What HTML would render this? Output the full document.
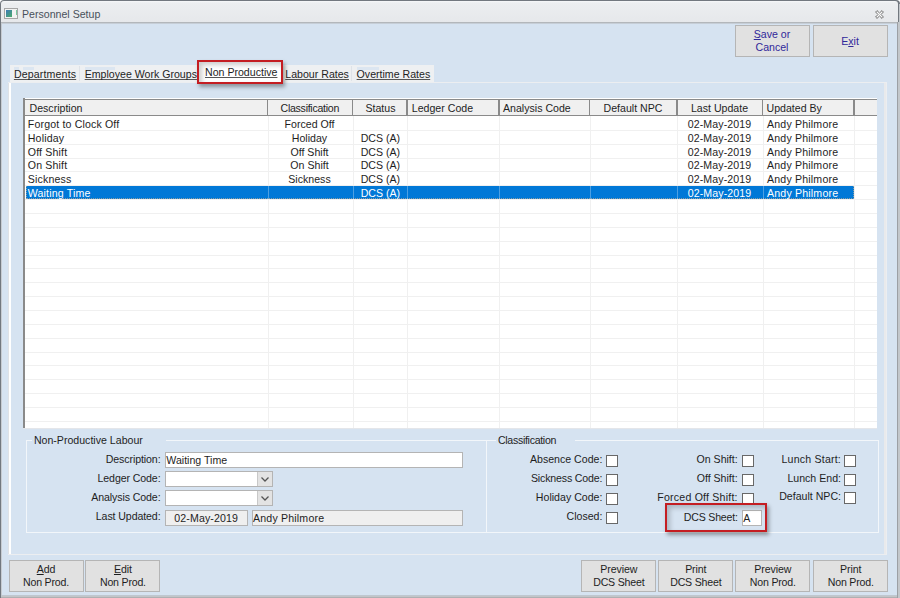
<!DOCTYPE html>
<html><head><meta charset="utf-8"><style>
html,body{margin:0;padding:0;}
body{width:900px;height:598px;position:relative;overflow:hidden;background:#ffffff;font-family:"Liberation Sans",sans-serif;}
.t{position:absolute;white-space:nowrap;line-height:1;}
</style></head><body>
<div style="position:absolute;left:0px;top:0px;width:900px;height:598px;background:#ffffff;"></div>
<div style="position:absolute;left:0px;top:0px;width:900px;height:598px;background:#72787f;border-radius:4px 4px 0 0;"></div>
<div style="position:absolute;left:1px;top:1px;width:897px;height:21px;background:linear-gradient(#f7f8f9 0px,#eceef0 2px,#e6e8eb 21px);border-radius:3px 3px 0 0;"></div>
<div style="position:absolute;left:899px;top:4px;width:1px;height:18px;background:#c3c7cb;"></div>
<div style="position:absolute;left:1px;top:22px;width:896px;height:1px;background:#b3b7bb;"></div>
<div style="position:absolute;left:1px;top:23px;width:896px;height:1px;background:#c6ced7;"></div>
<div style="position:absolute;left:1px;top:24px;width:896px;height:571px;background:#d6e3f1;"></div>
<div style="position:absolute;left:1px;top:23px;width:1px;height:573px;background:#c6cbd1;"></div>
<div style="position:absolute;left:897px;top:22px;width:1px;height:576px;background:#9ca0a5;"></div>
<div style="position:absolute;left:898px;top:22px;width:2px;height:576px;background:#c3c7cb;"></div>
<div style="position:absolute;left:1px;top:595px;width:896px;height:1px;background:#bfc7cf;"></div>
<div style="position:absolute;left:1px;top:596px;width:896px;height:1px;background:#c3c5c8;"></div>
<div style="position:absolute;left:1px;top:597px;width:896px;height:1px;background:#aeb0b3;"></div>
<div style="position:absolute;left:4px;top:8px;width:14px;height:11px;background:#f2f3f2;border:1px solid #a6a6a6;box-sizing:border-box;"></div>
<div style="position:absolute;left:6px;top:10px;width:6px;height:7px;background:linear-gradient(135deg,#3d7bb8,#4bab6a);"></div>
<div style="position:absolute;left:16px;top:10px;width:1px;height:5px;background:#7bc7a0;"></div>
<div class="t" style="left:22px;top:9.03px;font-size:10.6px;color:#48505a;">Personnel Setup</div>
<svg style="position:absolute;left:875px;top:9.7px" width="9" height="9" viewBox="0 0 9 9"><path d="M0.6 2 L2 0.6 L4.5 3 L7 0.6 L8.4 2 L6 4.5 L8.4 7 L7 8.4 L4.5 6 L2 8.4 L0.6 7 L3 4.5 Z" fill="#fbfbfb" stroke="#6f6f6f" stroke-width="1" stroke-linejoin="miter"/></svg>
<div style="position:absolute;left:735px;top:25px;width:75px;height:32px;background:#e1e1e1;border:1px solid #b5b5b5;box-sizing:border-box;"></div>
<div style="position:absolute;left:813px;top:25px;width:75px;height:32px;background:#e1e1e1;border:1px solid #b5b5b5;box-sizing:border-box;"></div>
<div class="t" style="left:672px;width:200px;text-align:center;top:28.83px;font-size:10.6px;color:#30289a;"><u>S</u>ave or</div>
<div class="t" style="left:672px;width:200px;text-align:center;top:41.53px;font-size:10.6px;color:#30289a;">Cancel</div>
<div class="t" style="left:750px;width:200px;text-align:center;top:36.13px;font-size:10.6px;color:#30289a;">E<u>x</u>it</div>
<div style="position:absolute;left:8px;top:82px;width:879px;height:473px;background:#eceef1;"></div>
<div style="position:absolute;left:11px;top:83px;width:873px;height:471px;background:#d6e3f1;"></div>
<div style="position:absolute;left:9px;top:83px;width:2px;height:471px;background:#ffffff;"></div>
<div style="position:absolute;left:8px;top:83px;width:1px;height:471px;background:#dfe2e6;"></div>
<div style="position:absolute;left:884px;top:83px;width:2px;height:471px;background:#e9eaec;"></div>
<div style="position:absolute;left:10px;top:65px;width:424px;height:17px;background:#eef0f2;"></div>
<div style="position:absolute;left:79px;top:66px;width:1px;height:15px;background:#dfe3e8;"></div>
<div style="position:absolute;left:351px;top:66px;width:1px;height:15px;background:#dfe3e8;"></div>
<div style="position:absolute;left:14px;top:67px;width:5px;height:3px;background:#dce6f1;"></div>
<div style="position:absolute;left:23px;top:67px;width:11px;height:3px;background:#dce6f1;"></div>
<div style="position:absolute;left:85px;top:67px;width:30px;height:3px;background:#dce6f1;"></div>
<div style="position:absolute;left:357px;top:67px;width:22px;height:3px;background:#dce6f1;"></div>
<div class="t" style="left:13.9px;top:68.83px;font-size:10.6px;color:#1e1e1e;text-decoration:underline;text-decoration-color:#555;text-decoration-skip-ink:none;letter-spacing:0.15px;">Departments</div>
<div class="t" style="left:84.7px;top:68.83px;font-size:10.6px;color:#1e1e1e;text-decoration:underline;text-decoration-color:#555;text-decoration-skip-ink:none;">Employee Work Groups</div>
<div class="t" style="left:285.3px;top:68.83px;font-size:10.6px;color:#1e1e1e;text-decoration:underline;text-decoration-color:#555;text-decoration-skip-ink:none;">Labour Rates</div>
<div class="t" style="left:356.6px;top:68.83px;font-size:10.6px;color:#1e1e1e;text-decoration:underline;text-decoration-color:#555;text-decoration-skip-ink:none;">Overtime Rates</div>
<div style="position:absolute;left:197px;top:60px;width:86px;height:24px;background:#ffffff;border:2px solid #c41d22;box-sizing:border-box;box-shadow:2px 3px 4px rgba(0,0,0,0.35), inset 3px 3px 5px rgba(0,0,0,0.2);"></div>
<div class="t" style="left:205px;top:67.33px;font-size:10.6px;color:#1e1e1e;text-decoration:underline;text-decoration-color:#555;text-decoration-skip-ink:none;">Non Productive</div>
<div style="position:absolute;left:23px;top:98px;width:853.5px;height:330px;background:#ffffff;"></div>
<div style="position:absolute;left:23px;top:98px;width:2px;height:330px;background:#8a8a8a;"></div>
<div style="position:absolute;left:25px;top:99px;width:851.5px;height:16px;background:#f0f0f0;"></div>
<div style="position:absolute;left:25px;top:98.5px;width:851.5px;height:1.5px;background:#8a8a8a;"></div>
<div style="position:absolute;left:25px;top:114.5px;width:851.5px;height:1.5px;background:#8a8a8a;"></div>
<div style="position:absolute;left:266.5px;top:99px;width:1.6px;height:16px;background:#8a8a8a;"></div>
<div style="position:absolute;left:351.8px;top:99px;width:1.6px;height:16px;background:#8a8a8a;"></div>
<div style="position:absolute;left:406px;top:99px;width:1.6px;height:16px;background:#8a8a8a;"></div>
<div style="position:absolute;left:498px;top:99px;width:1.6px;height:16px;background:#8a8a8a;"></div>
<div style="position:absolute;left:588.8px;top:99px;width:1.6px;height:16px;background:#8a8a8a;"></div>
<div style="position:absolute;left:676.2px;top:99px;width:1.6px;height:16px;background:#8a8a8a;"></div>
<div style="position:absolute;left:761.8px;top:99px;width:1.6px;height:16px;background:#8a8a8a;"></div>
<div style="position:absolute;left:853px;top:99px;width:1.6px;height:16px;background:#8a8a8a;"></div>
<div style="position:absolute;left:267.7px;top:116px;width:1px;height:312px;background:#f0f0f0;"></div>
<div style="position:absolute;left:353.0px;top:116px;width:1px;height:312px;background:#f0f0f0;"></div>
<div style="position:absolute;left:407.2px;top:116px;width:1px;height:312px;background:#f0f0f0;"></div>
<div style="position:absolute;left:499.2px;top:116px;width:1px;height:312px;background:#f0f0f0;"></div>
<div style="position:absolute;left:590.0px;top:116px;width:1px;height:312px;background:#f0f0f0;"></div>
<div style="position:absolute;left:677.4000000000001px;top:116px;width:1px;height:312px;background:#f0f0f0;"></div>
<div style="position:absolute;left:763.0px;top:116px;width:1px;height:312px;background:#f0f0f0;"></div>
<div style="position:absolute;left:854.2px;top:116px;width:1px;height:312px;background:#f0f0f0;"></div>
<div style="position:absolute;left:25px;top:129.9px;width:851.5px;height:1px;background:#f0f0f0;"></div>
<div style="position:absolute;left:25px;top:143.75px;width:851.5px;height:1px;background:#f0f0f0;"></div>
<div style="position:absolute;left:25px;top:157.6px;width:851.5px;height:1px;background:#f0f0f0;"></div>
<div style="position:absolute;left:25px;top:171.45px;width:851.5px;height:1px;background:#f0f0f0;"></div>
<div style="position:absolute;left:25px;top:185.3px;width:851.5px;height:1px;background:#f0f0f0;"></div>
<div style="position:absolute;left:25px;top:199.15px;width:851.5px;height:1px;background:#f0f0f0;"></div>
<div style="position:absolute;left:25px;top:213.0px;width:851.5px;height:1px;background:#f0f0f0;"></div>
<div style="position:absolute;left:25px;top:226.85000000000002px;width:851.5px;height:1px;background:#f0f0f0;"></div>
<div style="position:absolute;left:25px;top:240.7px;width:851.5px;height:1px;background:#f0f0f0;"></div>
<div style="position:absolute;left:25px;top:254.55px;width:851.5px;height:1px;background:#f0f0f0;"></div>
<div style="position:absolute;left:25px;top:268.4px;width:851.5px;height:1px;background:#f0f0f0;"></div>
<div style="position:absolute;left:25px;top:282.25px;width:851.5px;height:1px;background:#f0f0f0;"></div>
<div style="position:absolute;left:25px;top:296.1px;width:851.5px;height:1px;background:#f0f0f0;"></div>
<div style="position:absolute;left:25px;top:309.95px;width:851.5px;height:1px;background:#f0f0f0;"></div>
<div style="position:absolute;left:25px;top:323.8px;width:851.5px;height:1px;background:#f0f0f0;"></div>
<div style="position:absolute;left:25px;top:337.65px;width:851.5px;height:1px;background:#f0f0f0;"></div>
<div style="position:absolute;left:25px;top:351.5px;width:851.5px;height:1px;background:#f0f0f0;"></div>
<div style="position:absolute;left:25px;top:365.35px;width:851.5px;height:1px;background:#f0f0f0;"></div>
<div style="position:absolute;left:25px;top:379.2px;width:851.5px;height:1px;background:#f0f0f0;"></div>
<div style="position:absolute;left:25px;top:393.04999999999995px;width:851.5px;height:1px;background:#f0f0f0;"></div>
<div style="position:absolute;left:25px;top:406.9px;width:851.5px;height:1px;background:#f0f0f0;"></div>
<div style="position:absolute;left:25px;top:420.75px;width:851.5px;height:1px;background:#f0f0f0;"></div>
<div style="position:absolute;left:23px;top:428px;width:853.5px;height:1px;background:#e4e6ea;"></div>
<div style="position:absolute;left:26px;top:185.75px;width:828px;height:13.3px;background:#0078d7;"></div>
<div style="position:absolute;left:26px;top:185.75px;width:828px;height:13.3px;border:1px dotted rgba(255,190,120,0.55);border-top:none;box-sizing:border-box;"></div>
<div style="position:absolute;left:267.7px;top:186px;width:1px;height:13px;background:rgba(255,255,255,0.3);"></div>
<div style="position:absolute;left:353.0px;top:186px;width:1px;height:13px;background:rgba(255,255,255,0.3);"></div>
<div style="position:absolute;left:407.2px;top:186px;width:1px;height:13px;background:rgba(255,255,255,0.3);"></div>
<div style="position:absolute;left:499.2px;top:186px;width:1px;height:13px;background:rgba(255,255,255,0.3);"></div>
<div style="position:absolute;left:590.0px;top:186px;width:1px;height:13px;background:rgba(255,255,255,0.3);"></div>
<div style="position:absolute;left:677.4000000000001px;top:186px;width:1px;height:13px;background:rgba(255,255,255,0.3);"></div>
<div style="position:absolute;left:763.0px;top:186px;width:1px;height:13px;background:rgba(255,255,255,0.3);"></div>
<div class="t" style="left:29.5px;top:103.33px;font-size:10.6px;color:#1e1e1e;">Description</div>
<div class="t" style="left:209.8px;width:200px;text-align:center;top:103.33px;font-size:10.6px;color:#1e1e1e;letter-spacing:-0.28px;">Classification</div>
<div class="t" style="left:280.5px;width:200px;text-align:center;top:103.33px;font-size:10.6px;color:#1e1e1e;">Status</div>
<div class="t" style="left:411.8px;top:103.33px;font-size:10.6px;color:#1e1e1e;">Ledger Code</div>
<div class="t" style="left:503px;top:103.33px;font-size:10.6px;color:#1e1e1e;">Analysis Code</div>
<div class="t" style="left:533px;width:200px;text-align:center;top:103.33px;font-size:10.6px;color:#1e1e1e;">Default NPC</div>
<div class="t" style="left:619.5px;width:200px;text-align:center;top:103.33px;font-size:10.6px;color:#1e1e1e;">Last Update</div>
<div class="t" style="left:766.5px;top:103.33px;font-size:10.6px;color:#1e1e1e;">Updated By</div>
<div class="t" style="left:27.8px;top:118.93px;font-size:10.6px;color:#1e1e1e;letter-spacing:0.15px;">Forgot to Clock Off</div>
<div class="t" style="left:209.5px;width:200px;text-align:center;top:118.93px;font-size:10.6px;color:#1e1e1e;">Forced Off</div>
<div class="t" style="left:619.5px;width:200px;text-align:center;top:118.93px;font-size:10.6px;color:#1e1e1e;letter-spacing:0.12px;">02-May-2019</div>
<div class="t" style="left:767px;top:118.93px;font-size:10.6px;color:#1e1e1e;letter-spacing:0.18px;">Andy Philmore</div>
<div class="t" style="left:27.8px;top:132.78px;font-size:10.6px;color:#1e1e1e;letter-spacing:0.15px;">Holiday</div>
<div class="t" style="left:209.5px;width:200px;text-align:center;top:132.78px;font-size:10.6px;color:#1e1e1e;">Holiday</div>
<div class="t" style="left:360.7px;top:132.78px;font-size:10.6px;color:#1e1e1e;">DCS (A)</div>
<div class="t" style="left:619.5px;width:200px;text-align:center;top:132.78px;font-size:10.6px;color:#1e1e1e;letter-spacing:0.12px;">02-May-2019</div>
<div class="t" style="left:767px;top:132.78px;font-size:10.6px;color:#1e1e1e;letter-spacing:0.18px;">Andy Philmore</div>
<div class="t" style="left:27.8px;top:146.63px;font-size:10.6px;color:#1e1e1e;letter-spacing:0.15px;">Off Shift</div>
<div class="t" style="left:209.5px;width:200px;text-align:center;top:146.63px;font-size:10.6px;color:#1e1e1e;">Off Shift</div>
<div class="t" style="left:360.7px;top:146.63px;font-size:10.6px;color:#1e1e1e;">DCS (A)</div>
<div class="t" style="left:619.5px;width:200px;text-align:center;top:146.63px;font-size:10.6px;color:#1e1e1e;letter-spacing:0.12px;">02-May-2019</div>
<div class="t" style="left:767px;top:146.63px;font-size:10.6px;color:#1e1e1e;letter-spacing:0.18px;">Andy Philmore</div>
<div class="t" style="left:27.8px;top:160.48px;font-size:10.6px;color:#1e1e1e;letter-spacing:0.15px;">On Shift</div>
<div class="t" style="left:209.5px;width:200px;text-align:center;top:160.48px;font-size:10.6px;color:#1e1e1e;">On Shift</div>
<div class="t" style="left:360.7px;top:160.48px;font-size:10.6px;color:#1e1e1e;">DCS (A)</div>
<div class="t" style="left:619.5px;width:200px;text-align:center;top:160.48px;font-size:10.6px;color:#1e1e1e;letter-spacing:0.12px;">02-May-2019</div>
<div class="t" style="left:767px;top:160.48px;font-size:10.6px;color:#1e1e1e;letter-spacing:0.18px;">Andy Philmore</div>
<div class="t" style="left:27.8px;top:174.33px;font-size:10.6px;color:#1e1e1e;letter-spacing:0.15px;">Sickness</div>
<div class="t" style="left:209.5px;width:200px;text-align:center;top:174.33px;font-size:10.6px;color:#1e1e1e;">Sickness</div>
<div class="t" style="left:360.7px;top:174.33px;font-size:10.6px;color:#1e1e1e;">DCS (A)</div>
<div class="t" style="left:619.5px;width:200px;text-align:center;top:174.33px;font-size:10.6px;color:#1e1e1e;letter-spacing:0.12px;">02-May-2019</div>
<div class="t" style="left:767px;top:174.33px;font-size:10.6px;color:#1e1e1e;letter-spacing:0.18px;">Andy Philmore</div>
<div class="t" style="left:27.8px;top:188.18px;font-size:10.6px;color:#ffffff;letter-spacing:0.15px;">Waiting Time</div>
<div class="t" style="left:360.7px;top:188.18px;font-size:10.6px;color:#ffffff;">DCS (A)</div>
<div class="t" style="left:619.5px;width:200px;text-align:center;top:188.18px;font-size:10.6px;color:#ffffff;letter-spacing:0.12px;">02-May-2019</div>
<div class="t" style="left:767px;top:188.18px;font-size:10.6px;color:#ffffff;letter-spacing:0.18px;">Andy Philmore</div>
<div style="position:absolute;left:25.5px;top:440px;width:1px;height:92.5px;background:#f2f6fa;"></div>
<div style="position:absolute;left:25.5px;top:532px;width:460.5px;height:1px;background:#f2f6fa;"></div>
<div style="position:absolute;left:25.5px;top:440px;width:6px;height:1px;background:#f2f6fa;"></div>
<div style="position:absolute;left:166px;top:440px;width:320px;height:1px;background:#f2f6fa;"></div>
<div style="position:absolute;left:486px;top:440px;width:1px;height:92.5px;background:#f2f6fa;"></div>
<div class="t" style="left:33.9px;top:434.73px;font-size:10.6px;color:#1e1e1e;">Non-Productive Labour</div>
<div style="position:absolute;left:486px;top:440px;width:10px;height:1px;background:#f2f6fa;"></div>
<div style="position:absolute;left:575px;top:440px;width:303px;height:1px;background:#f2f6fa;"></div>
<div style="position:absolute;left:878px;top:440px;width:1px;height:92.5px;background:#f2f6fa;"></div>
<div style="position:absolute;left:486px;top:532px;width:392.5px;height:1px;background:#f2f6fa;"></div>
<div class="t" style="left:497.9px;top:434.73px;font-size:10.6px;color:#1e1e1e;letter-spacing:-0.3px;">Classification</div>
<div class="t" style="right:739.5px;top:453.93px;font-size:10.6px;color:#1e1e1e;letter-spacing:-0.1px;">Description:</div>
<div class="t" style="right:739.5px;top:472.73px;font-size:10.6px;color:#1e1e1e;letter-spacing:-0.1px;">Ledger Code:</div>
<div class="t" style="right:739.5px;top:491.73px;font-size:10.6px;color:#1e1e1e;letter-spacing:-0.1px;">Analysis Code:</div>
<div class="t" style="right:739.5px;top:511.43px;font-size:10.6px;color:#1e1e1e;letter-spacing:-0.1px;">Last Updated:</div>
<div style="position:absolute;left:165px;top:452px;width:298px;height:16px;background:#fff;border:1px solid #b4b4b4;box-sizing:border-box;"></div>
<div class="t" style="left:166.3px;top:455.03px;font-size:10.6px;color:#1e1e1e;">Waiting Time</div>
<div style="position:absolute;left:165px;top:471.4px;width:108px;height:16px;background:#fff;border:1px solid #b4b4b4;box-sizing:border-box;"></div>
<div style="position:absolute;left:257px;top:472.4px;width:15px;height:14px;background:#e3e3e3;border-left:1px solid #c8c8c8;box-sizing:border-box;"></div>
<svg style="position:absolute;left:261px;top:476.9px" width="8" height="5" viewBox="0 0 8 5"><path d="M0.5 0.5 L4 4 L7.5 0.5" fill="none" stroke="#555" stroke-width="1.25"/></svg>
<div style="position:absolute;left:165px;top:490.4px;width:108px;height:16px;background:#fff;border:1px solid #b4b4b4;box-sizing:border-box;"></div>
<div style="position:absolute;left:257px;top:491.4px;width:15px;height:14px;background:#e3e3e3;border-left:1px solid #c8c8c8;box-sizing:border-box;"></div>
<svg style="position:absolute;left:261px;top:495.9px" width="8" height="5" viewBox="0 0 8 5"><path d="M0.5 0.5 L4 4 L7.5 0.5" fill="none" stroke="#555" stroke-width="1.25"/></svg>
<div style="position:absolute;left:165px;top:510px;width:83px;height:16px;background:#efefef;border:1px solid #b4b4b4;box-sizing:border-box;"></div>
<div style="position:absolute;left:252px;top:510px;width:211px;height:16px;background:#efefef;border:1px solid #b4b4b4;box-sizing:border-box;"></div>
<div class="t" style="left:106.19999999999999px;width:200px;text-align:center;top:512.73px;font-size:10.6px;color:#1e1e1e;letter-spacing:0.12px;">02-May-2019</div>
<div class="t" style="left:253px;top:512.73px;font-size:10.6px;color:#1e1e1e;letter-spacing:0.18px;">Andy Philmore</div>
<div style="position:absolute;left:606px;top:455px;width:12px;height:12px;background:#fff;border:1px solid #686868;box-sizing:border-box;"></div>
<div class="t" style="right:297.6px;top:454.03px;font-size:10.6px;color:#1e1e1e;">Absence Code:</div>
<div style="position:absolute;left:606px;top:474px;width:12px;height:12px;background:#fff;border:1px solid #686868;box-sizing:border-box;"></div>
<div class="t" style="right:297.6px;top:473.03px;font-size:10.6px;color:#1e1e1e;letter-spacing:-0.15px;">Sickness Code:</div>
<div style="position:absolute;left:606px;top:493px;width:12px;height:12px;background:#fff;border:1px solid #686868;box-sizing:border-box;"></div>
<div class="t" style="right:297.6px;top:492.03px;font-size:10.6px;color:#1e1e1e;">Holiday Code:</div>
<div style="position:absolute;left:606px;top:512px;width:12px;height:12px;background:#fff;border:1px solid #686868;box-sizing:border-box;"></div>
<div class="t" style="right:297.6px;top:511.03px;font-size:10.6px;color:#1e1e1e;">Closed:</div>
<div style="position:absolute;left:742px;top:455.3px;width:12px;height:12px;background:#fff;border:1px solid #686868;box-sizing:border-box;"></div>
<div class="t" style="right:162.29999999999995px;top:454.33px;font-size:10.6px;color:#1e1e1e;">On Shift:</div>
<div style="position:absolute;left:742px;top:474.1px;width:12px;height:12px;background:#fff;border:1px solid #686868;box-sizing:border-box;"></div>
<div class="t" style="right:162.29999999999995px;top:473.13px;font-size:10.6px;color:#1e1e1e;">Off Shift:</div>
<div style="position:absolute;left:742px;top:492.90000000000003px;width:12px;height:12px;background:#fff;border:1px solid #686868;box-sizing:border-box;"></div>
<div class="t" style="right:162.29999999999995px;top:491.93px;font-size:10.6px;color:#1e1e1e;letter-spacing:0.2px;">Forced Off Shift:</div>
<div style="position:absolute;left:844.2px;top:455.2px;width:12px;height:12px;background:#fff;border:1px solid #686868;box-sizing:border-box;"></div>
<div class="t" style="right:59px;top:454.23px;font-size:10.6px;color:#1e1e1e;letter-spacing:0.2px;">Lunch Start:</div>
<div style="position:absolute;left:844.2px;top:473.7px;width:12px;height:12px;background:#fff;border:1px solid #686868;box-sizing:border-box;"></div>
<div class="t" style="right:59px;top:472.73px;font-size:10.6px;color:#1e1e1e;">Lunch End:</div>
<div style="position:absolute;left:844.2px;top:492.2px;width:12px;height:12px;background:#fff;border:1px solid #686868;box-sizing:border-box;"></div>
<div class="t" style="right:59px;top:491.23px;font-size:10.6px;color:#1e1e1e;">Default NPC:</div>
<div class="t" style="right:162.29999999999995px;top:512.03px;font-size:10.6px;color:#1e1e1e;letter-spacing:-0.2px;">DCS Sheet:</div>
<div style="position:absolute;left:742px;top:510.2px;width:20px;height:15.5px;background:#fff;border:1px solid #b4b4b4;box-sizing:border-box;"></div>
<div class="t" style="left:743.3px;top:512.53px;font-size:10.6px;color:#1e1e1e;">A</div>
<div style="position:absolute;left:665px;top:503px;width:102px;height:29px;border:2px solid #c41d22;box-sizing:border-box;box-shadow:2px 3px 4px rgba(0,0,0,0.35), inset 3px 3px 5px rgba(0,0,0,0.2);"></div>
<div style="position:absolute;left:8.5px;top:560px;width:75px;height:32px;background:#e1e1e1;border:1px solid #b5b5b5;box-sizing:border-box;"></div>
<div class="t" style="left:-54.0px;width:200px;text-align:center;top:564.23px;font-size:10.6px;color:#1e1e1e;letter-spacing:-0.1px;"><u>A</u>dd</div>
<div class="t" style="left:-54.0px;width:200px;text-align:center;top:577.43px;font-size:10.6px;color:#1e1e1e;letter-spacing:-0.2px;">Non Prod.</div>
<div style="position:absolute;left:85.4px;top:560px;width:75px;height:32px;background:#e1e1e1;border:1px solid #b5b5b5;box-sizing:border-box;"></div>
<div class="t" style="left:22.900000000000006px;width:200px;text-align:center;top:564.23px;font-size:10.6px;color:#1e1e1e;letter-spacing:-0.1px;"><u>E</u>dit</div>
<div class="t" style="left:22.900000000000006px;width:200px;text-align:center;top:577.43px;font-size:10.6px;color:#1e1e1e;letter-spacing:-0.2px;">Non Prod.</div>
<div style="position:absolute;left:581.3px;top:560px;width:75px;height:32px;background:#e1e1e1;border:1px solid #b5b5b5;box-sizing:border-box;"></div>
<div class="t" style="left:518.8px;width:200px;text-align:center;top:564.23px;font-size:10.6px;color:#1e1e1e;letter-spacing:-0.1px;">Preview</div>
<div class="t" style="left:518.8px;width:200px;text-align:center;top:577.43px;font-size:10.6px;color:#1e1e1e;letter-spacing:-0.2px;">DCS Sheet</div>
<div style="position:absolute;left:658.3px;top:560px;width:75px;height:32px;background:#e1e1e1;border:1px solid #b5b5b5;box-sizing:border-box;"></div>
<div class="t" style="left:595.8px;width:200px;text-align:center;top:564.23px;font-size:10.6px;color:#1e1e1e;letter-spacing:-0.1px;">Print</div>
<div class="t" style="left:595.8px;width:200px;text-align:center;top:577.43px;font-size:10.6px;color:#1e1e1e;letter-spacing:-0.2px;">DCS Sheet</div>
<div style="position:absolute;left:735.3px;top:560px;width:75px;height:32px;background:#e1e1e1;border:1px solid #b5b5b5;box-sizing:border-box;"></div>
<div class="t" style="left:672.8px;width:200px;text-align:center;top:564.23px;font-size:10.6px;color:#1e1e1e;letter-spacing:-0.1px;">Preview</div>
<div class="t" style="left:672.8px;width:200px;text-align:center;top:577.43px;font-size:10.6px;color:#1e1e1e;letter-spacing:-0.2px;">Non Prod.</div>
<div style="position:absolute;left:813.2px;top:560px;width:75px;height:32px;background:#e1e1e1;border:1px solid #b5b5b5;box-sizing:border-box;"></div>
<div class="t" style="left:750.7px;width:200px;text-align:center;top:564.23px;font-size:10.6px;color:#1e1e1e;letter-spacing:-0.1px;">Print</div>
<div class="t" style="left:750.7px;width:200px;text-align:center;top:577.43px;font-size:10.6px;color:#1e1e1e;letter-spacing:-0.2px;">Non Prod.</div>
</body></html>
